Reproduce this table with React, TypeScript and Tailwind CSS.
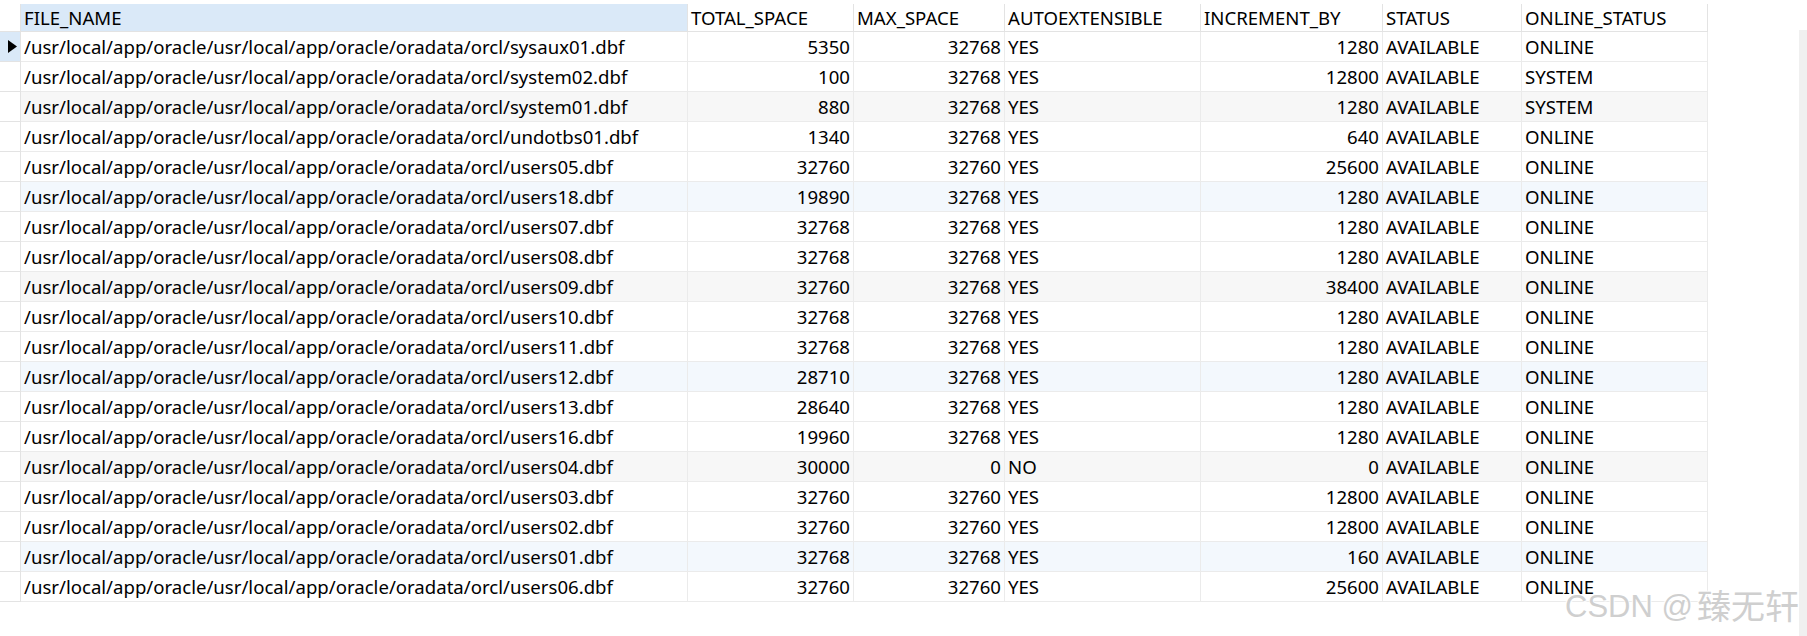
const rows: [string, string, string, string, string, string, string][] = [
  ['sysaux01', '5350', '32768', 'YES', '1280', 'AVAILABLE', 'ONLINE'],
  ['system02', '100', '32768', 'YES', '12800', 'AVAILABLE', 'SYSTEM'],
  ['system01', '880', '32768', 'YES', '1280', 'AVAILABLE', 'SYSTEM'],
  ['undotbs01', '1340', '32768', 'YES', '640', 'AVAILABLE', 'ONLINE'],
  ['users05', '32760', '32760', 'YES', '25600', 'AVAILABLE', 'ONLINE'],
  ['users18', '19890', '32768', 'YES', '1280', 'AVAILABLE', 'ONLINE'],
  ['users07', '32768', '32768', 'YES', '1280', 'AVAILABLE', 'ONLINE'],
  ['users08', '32768', '32768', 'YES', '1280', 'AVAILABLE', 'ONLINE'],
  ['users09', '32760', '32768', 'YES', '38400', 'AVAILABLE', 'ONLINE'],
  ['users10', '32768', '32768', 'YES', '1280', 'AVAILABLE', 'ONLINE'],
  ['users11', '32768', '32768', 'YES', '1280', 'AVAILABLE', 'ONLINE'],
  ['users12', '28710', '32768', 'YES', '1280', 'AVAILABLE', 'ONLINE'],
  ['users13', '28640', '32768', 'YES', '1280', 'AVAILABLE', 'ONLINE'],
  ['users16', '19960', '32768', 'YES', '1280', 'AVAILABLE', 'ONLINE'],
  ['users04', '30000', '0', 'NO', '0', 'AVAILABLE', 'ONLINE'],
  ['users03', '32760', '32760', 'YES', '12800', 'AVAILABLE', 'ONLINE'],
  ['users02', '32760', '32760', 'YES', '12800', 'AVAILABLE', 'ONLINE'],
  ['users01', '32768', '32768', 'YES', '160', 'AVAILABLE', 'ONLINE'],
  ['users06', '32760', '32760', 'YES', '25600', 'AVAILABLE', 'ONLINE'],
]

const headers = ['FILE_NAME', 'TOTAL_SPACE', 'MAX_SPACE', 'AUTOEXTENSIBLE', 'INCREMENT_BY', 'STATUS', 'ONLINE_STATUS']

const cols = 'grid grid-cols-[21px_667px_166px_151px_196px_182px_139px_186px]'
const cell = 'h-[30px] border-r border-b border-[#ebebeb] px-[3px] pt-[2px] flex items-center whitespace-nowrap overflow-hidden'

// every third row is tinted, alternating grey / blue
const rowBg = (i: number) => {
  if (i % 6 === 2) return 'bg-[#f7f7f7]'
  if (i % 6 === 5) return 'bg-[#f3f8fd]'
  return 'bg-white'
}

export default function App() {
  return (
    <div className="relative w-[1807px] h-[636px] bg-white overflow-hidden text-black text-[18.6px] font-['Noto_Sans',sans-serif] leading-none">
      <div className="pt-[4px] w-[1708px]">
        <div className={cols}>
          <div className="h-[28px] border-r border-b border-[#e3e3e3]" />
          {headers.map((h, i) => (
            <div
              key={h}
              className={`h-[28px] border-r border-b border-[#e3e3e3] px-[3px] pt-[2px] flex items-center ${i === 0 ? 'bg-[#dae9f8]' : 'bg-white'}`}
            >
              {h}
            </div>
          ))}
        </div>
        {rows.map((r, i) => (
          <div key={r[0]} className={`${cols} ${rowBg(i)}`}>
            <div className={`h-[30px] border-r border-b border-[#e3e3e3] flex items-center pl-[8px] ${i === 0 ? 'bg-[#dae9f8]' : 'bg-white'}`}>
              {i === 0 && (
                <svg width="9" height="13" viewBox="0 0 9 13">
                  <path d="M0 0 L9 6.5 L0 13 Z" fill="#000" />
                </svg>
              )}
            </div>
            <div className={cell}>/usr/local/app/oracle/usr/local/app/oracle/oradata/orcl/{r[0]}.dbf</div>
            <div className={`${cell} justify-end`}>{r[1]}</div>
            <div className={`${cell} justify-end`}>{r[2]}</div>
            <div className={cell}>{r[3]}</div>
            <div className={`${cell} justify-end`}>{r[4]}</div>
            <div className={cell}>{r[5]}</div>
            <div className={cell}>{r[6]}</div>
          </div>
        ))}
      </div>
      <div className="absolute right-0 top-[30px] bottom-0 w-[8px] bg-[#f0f0f0]" />
      <div className="absolute left-[1565px] top-[588px] flex items-end whitespace-nowrap leading-none text-[#cfcfcf] [text-shadow:1px_1px_1px_#ffffff,-1px_-1px_1px_#ffffff]">
        <span className="text-[31px] font-['Liberation_Sans',sans-serif]">CSDN @</span>
        <span className="ml-[4px] text-[34px] font-['Noto_Sans_CJK_SC',sans-serif]">臻无轩</span>
      </div>
    </div>
  )
}
